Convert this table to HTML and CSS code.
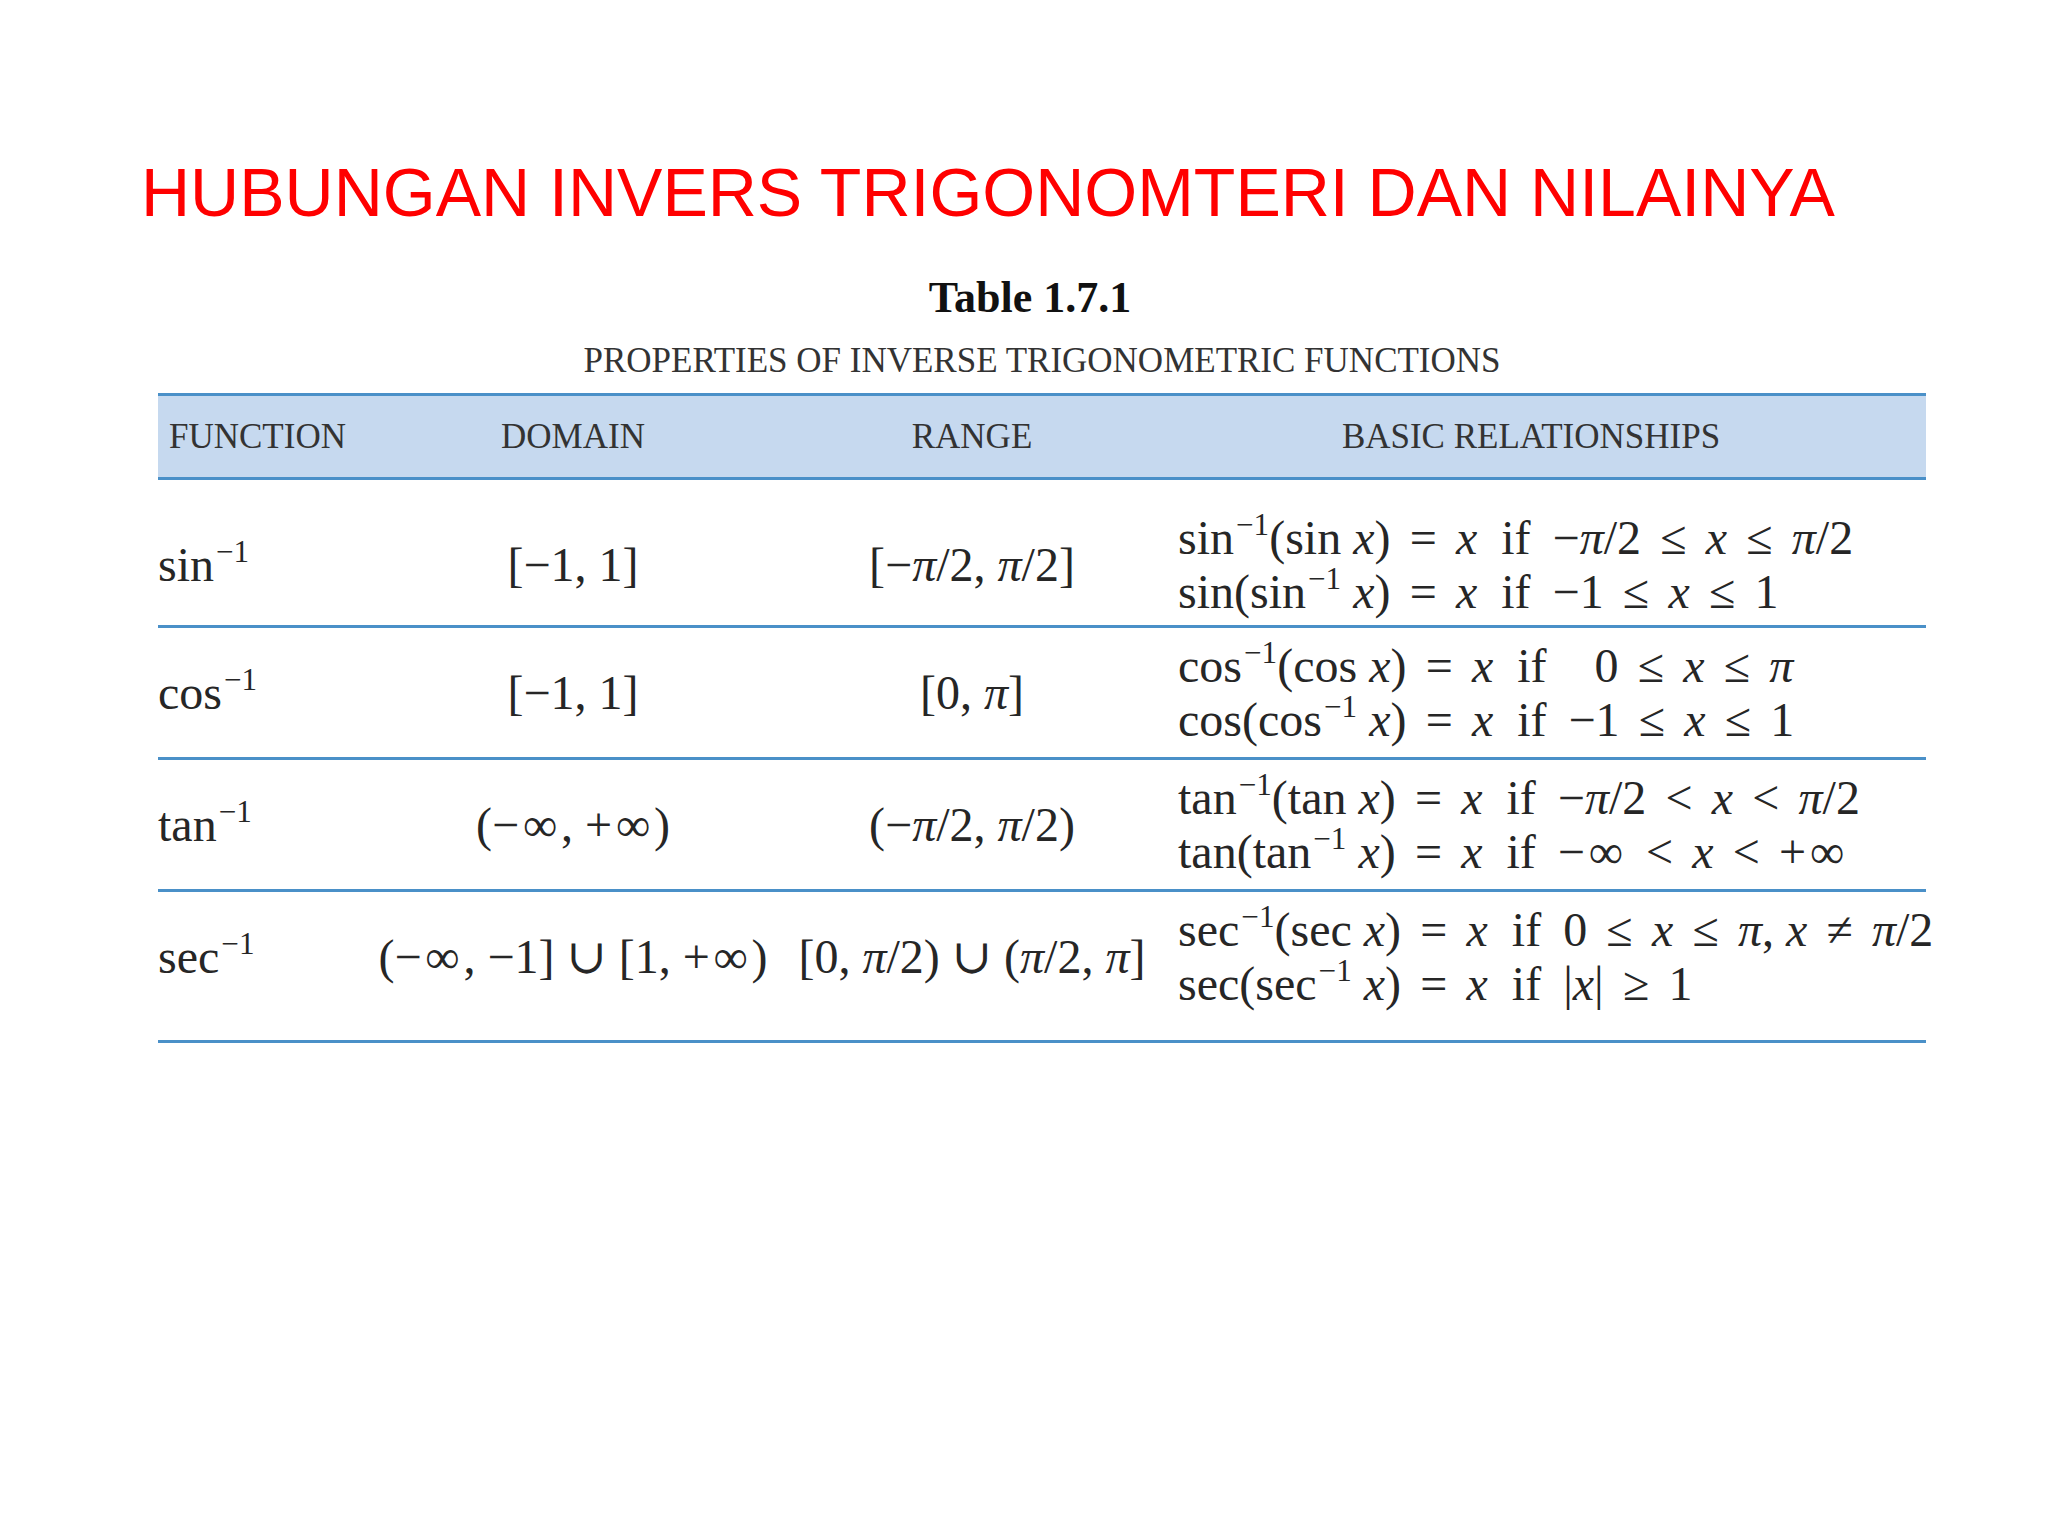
FILE: index.html
```html
<!DOCTYPE html>
<html lang="id">
<head>
<meta charset="utf-8">
<title>Hubungan Invers Trigonometri dan Nilainya</title>
<link rel="stylesheet" href="styles.css">
</head>
<body>
<main class="slide">
  <h1 class="title">HUBUNGAN INVERS TRIGONOMTERI DAN NILAINYA</h1>
  <section class="figure">
    <div class="cap-num">Table 1.7.1</div>
    <div class="cap-text">PROPERTIES OF INVERSE TRIGONOMETRIC FUNCTIONS</div>
    <div class="table">
      <div class="thead">
        <div class="th th-fn">FUNCTION</div>
        <div class="th">DOMAIN</div>
        <div class="th">RANGE</div>
        <div class="th th-rel">BASIC RELATIONSHIPS</div>
      </div>

      <div class="tr tr-first">
        <div class="td">sin<sup>−1</sup></div>
        <div class="td td-c">[−1, 1]</div>
        <div class="td td-c">[−<i>π</i>/2, <i>π</i>/2]</div>
        <div class="td rel">
          <span>sin<sup>−1</sup>(sin <i>x</i>) <span class="r">=</span> <i>x</i></span><span class="if">if</span><span>−<i>π</i>/2 <span class="r">≤</span> <i>x</i> <span class="r">≤</span> <i>π</i>/2</span>
          <span>sin(sin<sup>−1</sup> <i>x</i>) <span class="r">=</span> <i>x</i></span><span class="if">if</span><span>−1 <span class="r">≤</span> <i>x</i> <span class="r">≤</span> 1</span>
        </div>
      </div>

      <div class="tr">
        <div class="td">cos<sup>−1</sup></div>
        <div class="td td-c">[−1, 1]</div>
        <div class="td td-c">[0, <i>π</i>]</div>
        <div class="td rel">
          <span>cos<sup>−1</sup>(cos <i>x</i>) <span class="r">=</span> <i>x</i></span><span class="if">if</span><span class="ind">0 <span class="r">≤</span> <i>x</i> <span class="r">≤</span> <i>π</i></span>
          <span>cos(cos<sup>−1</sup> <i>x</i>) <span class="r">=</span> <i>x</i></span><span class="if">if</span><span>−1 <span class="r">≤</span> <i>x</i> <span class="r">≤</span> 1</span>
        </div>
      </div>

      <div class="tr">
        <div class="td">tan<sup>−1</sup></div>
        <div class="td td-c">(−<span class="inf">∞</span>, +<span class="inf">∞</span>)</div>
        <div class="td td-c">(−<i>π</i>/2, <i>π</i>/2)</div>
        <div class="td rel">
          <span>tan<sup>−1</sup>(tan <i>x</i>) <span class="r">=</span> <i>x</i></span><span class="if">if</span><span>−<i>π</i>/2 <span class="r">&lt;</span> <i>x</i> <span class="r">&lt;</span> <i>π</i>/2</span>
          <span>tan(tan<sup>−1</sup> <i>x</i>) <span class="r">=</span> <i>x</i></span><span class="if">if</span><span>−<span class="inf">∞</span> <span class="r">&lt;</span> <i>x</i> <span class="r">&lt;</span> +<span class="inf">∞</span></span>
        </div>
      </div>

      <div class="tr tr-last">
        <div class="td">sec<sup>−1</sup></div>
        <div class="td td-c">(−<span class="inf">∞</span>, −1] ∪ [1, +<span class="inf">∞</span>)</div>
        <div class="td td-c">[0, <i>π</i>/2) ∪ (<i>π</i>/2, <i>π</i>]</div>
        <div class="td rel">
          <span>sec<sup>−1</sup>(sec <i>x</i>) <span class="r">=</span> <i>x</i></span><span class="if">if</span><span>0 <span class="r">≤</span> <i>x</i> <span class="r">≤</span> <i>π</i>, <i>x</i> <span class="r">≠</span> <i>π</i>/2</span>
          <span>sec(sec<sup>−1</sup> <i>x</i>) <span class="r">=</span> <i>x</i></span><span class="if">if</span><span>|<i>x</i>| <span class="r">≥</span> 1</span>
        </div>
      </div>
    </div>
  </section>
</main>
</body>
</html>
```

FILE: styles.css
```css
html, body {
  margin: 0;
  padding: 0;
  background: #ffffff;
}

body {
  width: 2048px;
  height: 1536px;
  overflow: hidden;
  font-family: "Liberation Serif", "Times New Roman", "DejaVu Serif", serif;
}

.slide {
  padding-top: 152px;
}

.title {
  margin: 0;
  padding-left: 141px;
  font-family: "Liberation Sans", Arial, sans-serif;
  font-weight: 400;
  font-size: 68px;
  line-height: 80px;
  color: #ff0000;
  white-space: nowrap;
}

.figure {
  margin: 41px 0 0 158px;
  width: 1768px;
}

.cap-num {
  font-weight: 700;
  font-size: 44px;
  line-height: 50px;
  text-align: center;
  color: #111111;
  padding-right: 24px;
}

.cap-text {
  margin-top: 18px;
  font-size: 35px;
  line-height: 40px;
  text-align: center;
  color: #333333;
}

.table {
  margin-top: 12px;
}

.thead,
.tr {
  display: grid;
  grid-template-columns: 215px 400px 398px 1fr;
}

.thead {
  height: 81px;
  background: #c6d9ef;
  border-top: 3px solid #4a90c8;
  border-bottom: 3px solid #4a90c8;
}

.th {
  font-size: 35px;
  line-height: 81px;
  color: #333333;
  text-align: center;
  white-space: nowrap;
}

.th-fn {
  text-align: left;
  padding-left: 11px;
}

.th-rel {
  padding-right: 35px;
}

.tr {
  align-items: center;
  padding: 11px 0 10px;
  border-bottom: 3px solid #4a90c8;
  font-size: 48px;
  line-height: 54px;
  color: #262626;
}

.tr-first {
  padding-top: 31px;
  padding-bottom: 6px;
}

.tr-last {
  padding-bottom: 29px;
}

.td {
  white-space: nowrap;
}

.td-c {
  text-align: center;
}

.rel {
  display: grid;
  grid-template-columns: auto auto 1fr;
  padding-left: 7px;
}

.if {
  padding: 0 22px 0 24px;
}

.ind {
  padding-left: 26px;
}

.r {
  margin: 0 0.15em;
}

.inf {
  margin: 0 0.08em;
}

i {
  font-style: italic;
}

sup {
  font-size: 0.65em;
  line-height: 0;
  vertical-align: 19px;
  margin-left: 2px;
}
```
